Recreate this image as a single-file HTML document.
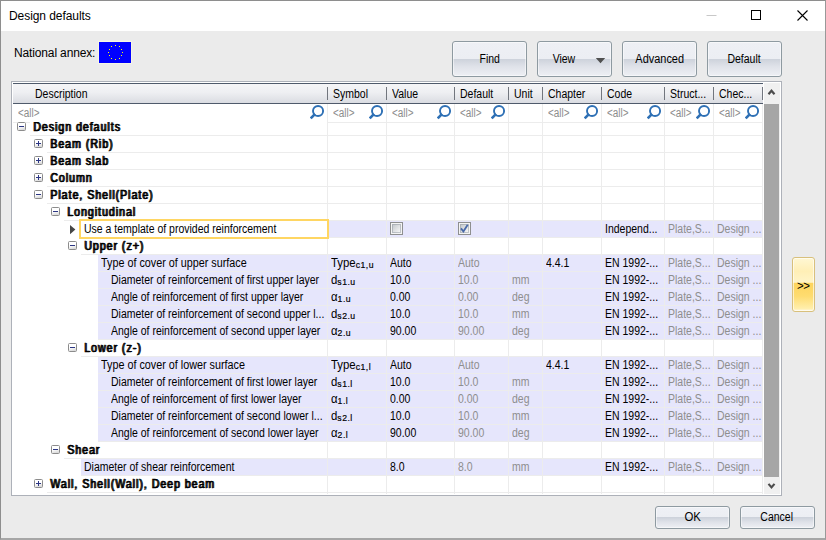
<!DOCTYPE html><html><head><meta charset="utf-8"><title>Design defaults</title><style>
*{box-sizing:border-box;margin:0;padding:0}
html,body{width:826px;height:540px;overflow:hidden;background:#ebebeb}
body{position:relative;font-family:"Liberation Sans","DejaVu Sans",sans-serif;font-size:11px;color:#000}
.abs{position:absolute}
#win{position:absolute;left:0;top:0;width:826px;height:540px;border:1px solid #8e8e8e;border-right-color:#999;border-bottom:2px solid #a6a6a6;background:#ebebeb}
#title{position:absolute;left:1px;top:1px;width:824px;height:30px;background:#fff}
#title .t{position:absolute;left:8px;top:7px;font-size:12px;line-height:16px;letter-spacing:-0.07px}
.btn{position:absolute;height:36px;width:75px;border:1px solid #8e9aa1;border-radius:3px;text-align:center;line-height:34px;font-size:12px;
 background:linear-gradient(#eef0f5 0,#eceef3 50%,#cdd2db 50%,#dfe2e9 72%,#eef0f4 100%);box-shadow:inset 0 0 0 1px rgba(255,255,255,.5)}
.sbtn{position:absolute;height:23px;width:75px;border:1px solid #8e9aa1;border-radius:3px;text-align:center;line-height:21px;font-size:12px;
 background:linear-gradient(#eef0f5 0,#eceef3 50%,#cdd2db 50%,#dfe2e9 72%,#eef0f4 100%);box-shadow:inset 0 0 0 1px rgba(255,255,255,.5)}
.btn span,.sbtn span{display:inline-block;transform:scaleX(.874);transform-origin:50% 50%}
#grid{position:absolute;left:11px;top:81px;width:771px;height:415px;border:1px solid #adb1b9;background:#fff;overflow:hidden}
#g{position:absolute;left:-12px;top:-82px;width:826px;height:540px}
.hdr{position:absolute;left:13px;top:83px;width:750px;height:21px;background:linear-gradient(#f5f5f7 0,#eeeff2 45%,#dadce2 100%);border-top:1px solid #4f5a6b;border-bottom:1px solid #4f5a6b}
.hsep{position:absolute;top:87px;width:1px;height:13px;background:#72767e}
.ht{position:absolute;top:86px;line-height:16px;font-size:12.5px;white-space:nowrap;transform:scaleX(.839);transform-origin:0 0}
.vl{position:absolute;top:104px;width:1px;height:390px;background:#ececec}
.hl{position:absolute;height:1px;background:#ececec}
.row{position:absolute;height:16px}
.lav{position:absolute;height:16px;background:#e6e6fc}
.tx{position:absolute;line-height:16px;white-space:nowrap;font-size:12.5px;transform:scaleX(.839);transform-origin:0 0}
.b{letter-spacing:1.22px;text-shadow:1.19px 0 0 #000;-webkit-text-stroke:0.45px #000}
.gr{color:#8e8e8e}
.all{position:absolute;top:105px;line-height:16px;color:#8c8c8c;font-size:12px;transform:scaleX(.83);transform-origin:0 0}
.exp{position:absolute;width:9px;height:9px;border:1px solid #8c8c8c;border-radius:1.5px;background:linear-gradient(165deg,#fff 0,#fff 45%,#d2d2d2 100%)}
.exp i{position:absolute;left:1px;top:3px;width:5px;height:1px;background:#2c3684}
.exp b{position:absolute;left:3px;top:1px;width:1px;height:5px;background:#2c3684}
sub{font-size:9.5px;vertical-align:baseline;position:relative;top:1px;letter-spacing:0.55px;line-height:0;-webkit-text-stroke:0.2px #000}
</style></head><body>
<div id="win">
</div>
<div id="title"><div class="t">Design defaults</div>
<svg class="abs" style="left:699px;top:0" width="125" height="30" viewBox="0 0 125 30"><path d="M6.5 14.5h10" stroke="#c8c8c8" stroke-width="1" fill="none"/><rect x="51.5" y="9.5" width="9" height="9" stroke="#000" stroke-width="1" fill="none"/><path d="M97.5 9.5l10 10M107.5 9.5l-10 10" stroke="#000" stroke-width="1.1" fill="none"/></svg>
</div>
<div class="abs" style="left:14px;top:45px;font-size:12px;line-height:16px;letter-spacing:-0.14px">National annex:</div>
<svg class="abs" style="left:98px;top:41px" width="34" height="23" viewBox="0 0 34 23" shape-rendering="crispEdges"><rect width="34" height="23" fill="#f6f6e4"/><rect x="1" y="1" width="32" height="21" fill="#0000ff"/><rect x="17" y="4" width="1" height="1" fill="#ffff00"/><rect x="21" y="5" width="1" height="1" fill="#ffff00"/><rect x="23" y="8" width="1" height="1" fill="#ffff00"/><rect x="24" y="11" width="1" height="1" fill="#ffff00"/><rect x="23" y="14" width="1" height="1" fill="#ffff00"/><rect x="21" y="17" width="1" height="1" fill="#ffff00"/><rect x="17" y="18" width="1" height="1" fill="#ffff00"/><rect x="13" y="17" width="1" height="1" fill="#ffff00"/><rect x="11" y="14" width="1" height="1" fill="#ffff00"/><rect x="10" y="11" width="1" height="1" fill="#ffff00"/><rect x="11" y="8" width="1" height="1" fill="#ffff00"/><rect x="13" y="5" width="1" height="1" fill="#ffff00"/></svg>
<div class="btn" style="left:452px;top:41px"><span>Find</span></div>
<div class="btn" style="left:537px;top:41px"><span style="position:absolute;left:13px;top:0">View</span><svg class="abs" style="left:57px;top:16px" width="11" height="6"><path d="M0.8 0h9.4l-4.7 5.2z" fill="#505050"/></svg></div>
<div class="btn" style="left:622px;top:41px"><span style="transform:scaleX(.913)">Advanced</span></div>
<div class="btn" style="left:707px;top:41px"><span>Default</span></div>
<div id="grid"><div id="g">
<div class="hdr"></div>
<div class="ht" style="left:35px">Description</div>
<div class="hsep" style="left:327px"></div>
<div class="ht" style="left:333px">Symbol</div>
<div class="hsep" style="left:386px"></div>
<div class="ht" style="left:392px">Value</div>
<div class="hsep" style="left:454px"></div>
<div class="ht" style="left:460px">Default</div>
<div class="hsep" style="left:508px"></div>
<div class="ht" style="left:514px">Unit</div>
<div class="hsep" style="left:542px"></div>
<div class="ht" style="left:548px">Chapter</div>
<div class="hsep" style="left:601px"></div>
<div class="ht" style="left:607px">Code</div>
<div class="hsep" style="left:664px"></div>
<div class="ht" style="left:670px">Struct...</div>
<div class="hsep" style="left:713px"></div>
<div class="ht" style="left:719px">Chec...</div>
<div class="hsep" style="left:762px"></div>
<div class="vl" style="left:327px"></div>
<div class="vl" style="left:386px"></div>
<div class="vl" style="left:454px"></div>
<div class="vl" style="left:508px"></div>
<div class="vl" style="left:542px"></div>
<div class="vl" style="left:601px"></div>
<div class="vl" style="left:664px"></div>
<div class="vl" style="left:713px"></div>
<div class="vl" style="left:762px"></div>
<div class="hl" style="left:30px;top:135px;width:733px"></div>
<div class="exp" style="left:17px;top:122px"><i></i></div>
<div class="tx b" style="left:33px;top:119px">Design defaults</div>
<div class="hl" style="left:47px;top:152px;width:716px"></div>
<div class="exp" style="left:34px;top:139px"><i></i><b></b></div>
<div class="tx b" style="left:50px;top:136px">Beam (Rib)</div>
<div class="hl" style="left:47px;top:169px;width:716px"></div>
<div class="exp" style="left:34px;top:156px"><i></i><b></b></div>
<div class="tx b" style="left:50px;top:153px">Beam slab</div>
<div class="hl" style="left:47px;top:186px;width:716px"></div>
<div class="exp" style="left:34px;top:173px"><i></i><b></b></div>
<div class="tx b" style="left:50px;top:170px">Column</div>
<div class="hl" style="left:47px;top:203px;width:716px"></div>
<div class="exp" style="left:34px;top:190px"><i></i></div>
<div class="tx b" style="left:50px;top:187px">Plate, Shell(Plate)</div>
<div class="hl" style="left:64px;top:220px;width:699px"></div>
<div class="exp" style="left:51px;top:207px"><i></i></div>
<div class="tx b" style="left:67px;top:204px">Longitudinal</div>
<div class="lav" style="left:329px;top:221px;width:433px"></div>
<div class="hl" style="left:81px;top:237px;width:682px"></div>
<div class="abs" style="left:327px;top:221px;width:1px;height:16px;background:#ececec"></div>
<div class="abs" style="left:386px;top:221px;width:1px;height:16px;background:#ececec"></div>
<div class="abs" style="left:454px;top:221px;width:1px;height:16px;background:#ececec"></div>
<div class="abs" style="left:508px;top:221px;width:1px;height:16px;background:#ececec"></div>
<div class="abs" style="left:542px;top:221px;width:1px;height:16px;background:#ececec"></div>
<div class="abs" style="left:601px;top:221px;width:1px;height:16px;background:#ececec"></div>
<div class="abs" style="left:664px;top:221px;width:1px;height:16px;background:#ececec"></div>
<div class="abs" style="left:713px;top:221px;width:1px;height:16px;background:#ececec"></div>
<div class="abs" style="left:79px;top:219px;width:250px;height:20px;border:2px solid #ffd662;background:#fff"></div>
<svg class="abs" style="left:70px;top:225px" width="6" height="11"><path d="M0 0L5.4 4.6L0 9.2z" fill="#464646"/></svg>
<div class="tx" style="left:84px;top:221px">Use a template of provided reinforcement</div>
<div class="abs" style="left:390px;top:222px;width:13px;height:13px;border:1px solid #8e8f8f;background:linear-gradient(135deg,#c4c8cc 15%,#f8f8f8 85%);box-shadow:inset 0 0 0 1px #f4f4f4, inset 0 0 0 2px rgba(150,156,164,.55)"></div>
<div class="abs" style="left:458px;top:222px;width:13px;height:13px;border:1px solid #8e8f8f;background:linear-gradient(135deg,#c4c8cc 15%,#f8f8f8 85%);box-shadow:inset 0 0 0 1px #f4f4f4, inset 0 0 0 2px rgba(150,156,164,.55)"></div>
<svg class="abs" style="left:458px;top:222px" width="13" height="13"><path d="M3.0 6.4L5.4 9.5L9.7 2.7" stroke="#4868a8" stroke-width="1.8" fill="none"/></svg>
<div class="tx" style="left:605px;top:221px">Independ...</div>
<div class="tx gr" style="left:668px;top:221px">Plate,S...</div>
<div class="tx gr" style="left:717px;top:221px">Design ...</div>
<div class="hl" style="left:81px;top:254px;width:682px"></div>
<div class="exp" style="left:68px;top:241px"><i></i></div>
<div class="tx b" style="left:84px;top:238px">Upper (z+)</div>
<div class="lav" style="left:98px;top:255px;width:664px"></div>
<div class="hl" style="left:98px;top:271px;width:665px"></div>
<div class="abs" style="left:327px;top:255px;width:1px;height:16px;background:#ececec"></div>
<div class="abs" style="left:386px;top:255px;width:1px;height:16px;background:#ececec"></div>
<div class="abs" style="left:454px;top:255px;width:1px;height:16px;background:#ececec"></div>
<div class="abs" style="left:508px;top:255px;width:1px;height:16px;background:#ececec"></div>
<div class="abs" style="left:542px;top:255px;width:1px;height:16px;background:#ececec"></div>
<div class="abs" style="left:601px;top:255px;width:1px;height:16px;background:#ececec"></div>
<div class="abs" style="left:664px;top:255px;width:1px;height:16px;background:#ececec"></div>
<div class="abs" style="left:713px;top:255px;width:1px;height:16px;background:#ececec"></div>
<div class="tx" style="left:101px;top:255px;transform:scaleX(.863)">Type of cover of upper surface</div>
<div class="tx" style="left:331px;top:255px;transform:scaleX(.91)">Type<sub>c1,u</sub></div>
<div class="tx" style="left:390px;top:255px">Auto</div>
<div class="tx gr" style="left:458px;top:255px">Auto</div>
<div class="tx" style="left:546px;top:255px">4.4.1</div>
<div class="tx" style="left:605px;top:255px">EN 1992-...</div>
<div class="tx gr" style="left:668px;top:255px">Plate,S...</div>
<div class="tx gr" style="left:717px;top:255px">Design ...</div>
<div class="lav" style="left:98px;top:272px;width:664px"></div>
<div class="hl" style="left:98px;top:288px;width:665px"></div>
<div class="abs" style="left:327px;top:272px;width:1px;height:16px;background:#ececec"></div>
<div class="abs" style="left:386px;top:272px;width:1px;height:16px;background:#ececec"></div>
<div class="abs" style="left:454px;top:272px;width:1px;height:16px;background:#ececec"></div>
<div class="abs" style="left:508px;top:272px;width:1px;height:16px;background:#ececec"></div>
<div class="abs" style="left:542px;top:272px;width:1px;height:16px;background:#ececec"></div>
<div class="abs" style="left:601px;top:272px;width:1px;height:16px;background:#ececec"></div>
<div class="abs" style="left:664px;top:272px;width:1px;height:16px;background:#ececec"></div>
<div class="abs" style="left:713px;top:272px;width:1px;height:16px;background:#ececec"></div>
<div class="tx" style="left:111px;top:272px">Diameter of reinforcement of first upper layer</div>
<div class="tx" style="left:331px;top:272px;transform:scaleX(.91)">d<sub>s1.u</sub></div>
<div class="tx" style="left:390px;top:272px">10.0</div>
<div class="tx gr" style="left:458px;top:272px">10.0</div>
<div class="tx gr" style="left:512px;top:272px">mm</div>
<div class="tx" style="left:605px;top:272px">EN 1992-...</div>
<div class="tx gr" style="left:668px;top:272px">Plate,S...</div>
<div class="tx gr" style="left:717px;top:272px">Design ...</div>
<div class="lav" style="left:98px;top:289px;width:664px"></div>
<div class="hl" style="left:98px;top:305px;width:665px"></div>
<div class="abs" style="left:327px;top:289px;width:1px;height:16px;background:#ececec"></div>
<div class="abs" style="left:386px;top:289px;width:1px;height:16px;background:#ececec"></div>
<div class="abs" style="left:454px;top:289px;width:1px;height:16px;background:#ececec"></div>
<div class="abs" style="left:508px;top:289px;width:1px;height:16px;background:#ececec"></div>
<div class="abs" style="left:542px;top:289px;width:1px;height:16px;background:#ececec"></div>
<div class="abs" style="left:601px;top:289px;width:1px;height:16px;background:#ececec"></div>
<div class="abs" style="left:664px;top:289px;width:1px;height:16px;background:#ececec"></div>
<div class="abs" style="left:713px;top:289px;width:1px;height:16px;background:#ececec"></div>
<div class="tx" style="left:111px;top:289px">Angle of reinforcement of first upper layer</div>
<div class="tx" style="left:331px;top:289px;transform:scaleX(.91)">α<sub>1.u</sub></div>
<div class="tx" style="left:390px;top:289px">0.00</div>
<div class="tx gr" style="left:458px;top:289px">0.00</div>
<div class="tx gr" style="left:512px;top:289px">deg</div>
<div class="tx" style="left:605px;top:289px">EN 1992-...</div>
<div class="tx gr" style="left:668px;top:289px">Plate,S...</div>
<div class="tx gr" style="left:717px;top:289px">Design ...</div>
<div class="lav" style="left:98px;top:306px;width:664px"></div>
<div class="hl" style="left:98px;top:322px;width:665px"></div>
<div class="abs" style="left:327px;top:306px;width:1px;height:16px;background:#ececec"></div>
<div class="abs" style="left:386px;top:306px;width:1px;height:16px;background:#ececec"></div>
<div class="abs" style="left:454px;top:306px;width:1px;height:16px;background:#ececec"></div>
<div class="abs" style="left:508px;top:306px;width:1px;height:16px;background:#ececec"></div>
<div class="abs" style="left:542px;top:306px;width:1px;height:16px;background:#ececec"></div>
<div class="abs" style="left:601px;top:306px;width:1px;height:16px;background:#ececec"></div>
<div class="abs" style="left:664px;top:306px;width:1px;height:16px;background:#ececec"></div>
<div class="abs" style="left:713px;top:306px;width:1px;height:16px;background:#ececec"></div>
<div class="tx" style="left:111px;top:306px">Diameter of reinforcement of second upper l...</div>
<div class="tx" style="left:331px;top:306px;transform:scaleX(.91)">d<sub>s2.u</sub></div>
<div class="tx" style="left:390px;top:306px">10.0</div>
<div class="tx gr" style="left:458px;top:306px">10.0</div>
<div class="tx gr" style="left:512px;top:306px">mm</div>
<div class="tx" style="left:605px;top:306px">EN 1992-...</div>
<div class="tx gr" style="left:668px;top:306px">Plate,S...</div>
<div class="tx gr" style="left:717px;top:306px">Design ...</div>
<div class="lav" style="left:98px;top:323px;width:664px"></div>
<div class="hl" style="left:98px;top:339px;width:665px"></div>
<div class="abs" style="left:327px;top:323px;width:1px;height:16px;background:#ececec"></div>
<div class="abs" style="left:386px;top:323px;width:1px;height:16px;background:#ececec"></div>
<div class="abs" style="left:454px;top:323px;width:1px;height:16px;background:#ececec"></div>
<div class="abs" style="left:508px;top:323px;width:1px;height:16px;background:#ececec"></div>
<div class="abs" style="left:542px;top:323px;width:1px;height:16px;background:#ececec"></div>
<div class="abs" style="left:601px;top:323px;width:1px;height:16px;background:#ececec"></div>
<div class="abs" style="left:664px;top:323px;width:1px;height:16px;background:#ececec"></div>
<div class="abs" style="left:713px;top:323px;width:1px;height:16px;background:#ececec"></div>
<div class="tx" style="left:111px;top:323px">Angle of reinforcement of second upper layer</div>
<div class="tx" style="left:331px;top:323px;transform:scaleX(.91)">α<sub>2.u</sub></div>
<div class="tx" style="left:390px;top:323px">90.00</div>
<div class="tx gr" style="left:458px;top:323px">90.00</div>
<div class="tx gr" style="left:512px;top:323px">deg</div>
<div class="tx" style="left:605px;top:323px">EN 1992-...</div>
<div class="tx gr" style="left:668px;top:323px">Plate,S...</div>
<div class="tx gr" style="left:717px;top:323px">Design ...</div>
<div class="hl" style="left:81px;top:356px;width:682px"></div>
<div class="exp" style="left:68px;top:343px"><i></i></div>
<div class="tx b" style="left:84px;top:340px">Lower (z-)</div>
<div class="lav" style="left:98px;top:357px;width:664px"></div>
<div class="hl" style="left:98px;top:373px;width:665px"></div>
<div class="abs" style="left:327px;top:357px;width:1px;height:16px;background:#ececec"></div>
<div class="abs" style="left:386px;top:357px;width:1px;height:16px;background:#ececec"></div>
<div class="abs" style="left:454px;top:357px;width:1px;height:16px;background:#ececec"></div>
<div class="abs" style="left:508px;top:357px;width:1px;height:16px;background:#ececec"></div>
<div class="abs" style="left:542px;top:357px;width:1px;height:16px;background:#ececec"></div>
<div class="abs" style="left:601px;top:357px;width:1px;height:16px;background:#ececec"></div>
<div class="abs" style="left:664px;top:357px;width:1px;height:16px;background:#ececec"></div>
<div class="abs" style="left:713px;top:357px;width:1px;height:16px;background:#ececec"></div>
<div class="tx" style="left:101px;top:357px;transform:scaleX(.863)">Type of cover of lower surface</div>
<div class="tx" style="left:331px;top:357px;transform:scaleX(.91)">Type<sub>c1,l</sub></div>
<div class="tx" style="left:390px;top:357px">Auto</div>
<div class="tx gr" style="left:458px;top:357px">Auto</div>
<div class="tx" style="left:546px;top:357px">4.4.1</div>
<div class="tx" style="left:605px;top:357px">EN 1992-...</div>
<div class="tx gr" style="left:668px;top:357px">Plate,S...</div>
<div class="tx gr" style="left:717px;top:357px">Design ...</div>
<div class="lav" style="left:98px;top:374px;width:664px"></div>
<div class="hl" style="left:98px;top:390px;width:665px"></div>
<div class="abs" style="left:327px;top:374px;width:1px;height:16px;background:#ececec"></div>
<div class="abs" style="left:386px;top:374px;width:1px;height:16px;background:#ececec"></div>
<div class="abs" style="left:454px;top:374px;width:1px;height:16px;background:#ececec"></div>
<div class="abs" style="left:508px;top:374px;width:1px;height:16px;background:#ececec"></div>
<div class="abs" style="left:542px;top:374px;width:1px;height:16px;background:#ececec"></div>
<div class="abs" style="left:601px;top:374px;width:1px;height:16px;background:#ececec"></div>
<div class="abs" style="left:664px;top:374px;width:1px;height:16px;background:#ececec"></div>
<div class="abs" style="left:713px;top:374px;width:1px;height:16px;background:#ececec"></div>
<div class="tx" style="left:111px;top:374px">Diameter of reinforcement of first lower layer</div>
<div class="tx" style="left:331px;top:374px;transform:scaleX(.91)">d<sub>s1.l</sub></div>
<div class="tx" style="left:390px;top:374px">10.0</div>
<div class="tx gr" style="left:458px;top:374px">10.0</div>
<div class="tx gr" style="left:512px;top:374px">mm</div>
<div class="tx" style="left:605px;top:374px">EN 1992-...</div>
<div class="tx gr" style="left:668px;top:374px">Plate,S...</div>
<div class="tx gr" style="left:717px;top:374px">Design ...</div>
<div class="lav" style="left:98px;top:391px;width:664px"></div>
<div class="hl" style="left:98px;top:407px;width:665px"></div>
<div class="abs" style="left:327px;top:391px;width:1px;height:16px;background:#ececec"></div>
<div class="abs" style="left:386px;top:391px;width:1px;height:16px;background:#ececec"></div>
<div class="abs" style="left:454px;top:391px;width:1px;height:16px;background:#ececec"></div>
<div class="abs" style="left:508px;top:391px;width:1px;height:16px;background:#ececec"></div>
<div class="abs" style="left:542px;top:391px;width:1px;height:16px;background:#ececec"></div>
<div class="abs" style="left:601px;top:391px;width:1px;height:16px;background:#ececec"></div>
<div class="abs" style="left:664px;top:391px;width:1px;height:16px;background:#ececec"></div>
<div class="abs" style="left:713px;top:391px;width:1px;height:16px;background:#ececec"></div>
<div class="tx" style="left:111px;top:391px">Angle of reinforcement of first lower layer</div>
<div class="tx" style="left:331px;top:391px;transform:scaleX(.91)">α<sub>1.l</sub></div>
<div class="tx" style="left:390px;top:391px">0.00</div>
<div class="tx gr" style="left:458px;top:391px">0.00</div>
<div class="tx gr" style="left:512px;top:391px">deg</div>
<div class="tx" style="left:605px;top:391px">EN 1992-...</div>
<div class="tx gr" style="left:668px;top:391px">Plate,S...</div>
<div class="tx gr" style="left:717px;top:391px">Design ...</div>
<div class="lav" style="left:98px;top:408px;width:664px"></div>
<div class="hl" style="left:98px;top:424px;width:665px"></div>
<div class="abs" style="left:327px;top:408px;width:1px;height:16px;background:#ececec"></div>
<div class="abs" style="left:386px;top:408px;width:1px;height:16px;background:#ececec"></div>
<div class="abs" style="left:454px;top:408px;width:1px;height:16px;background:#ececec"></div>
<div class="abs" style="left:508px;top:408px;width:1px;height:16px;background:#ececec"></div>
<div class="abs" style="left:542px;top:408px;width:1px;height:16px;background:#ececec"></div>
<div class="abs" style="left:601px;top:408px;width:1px;height:16px;background:#ececec"></div>
<div class="abs" style="left:664px;top:408px;width:1px;height:16px;background:#ececec"></div>
<div class="abs" style="left:713px;top:408px;width:1px;height:16px;background:#ececec"></div>
<div class="tx" style="left:111px;top:408px">Diameter of reinforcement of second lower l...</div>
<div class="tx" style="left:331px;top:408px;transform:scaleX(.91)">d<sub>s2.l</sub></div>
<div class="tx" style="left:390px;top:408px">10.0</div>
<div class="tx gr" style="left:458px;top:408px">10.0</div>
<div class="tx gr" style="left:512px;top:408px">mm</div>
<div class="tx" style="left:605px;top:408px">EN 1992-...</div>
<div class="tx gr" style="left:668px;top:408px">Plate,S...</div>
<div class="tx gr" style="left:717px;top:408px">Design ...</div>
<div class="lav" style="left:98px;top:425px;width:664px"></div>
<div class="hl" style="left:98px;top:441px;width:665px"></div>
<div class="abs" style="left:327px;top:425px;width:1px;height:16px;background:#ececec"></div>
<div class="abs" style="left:386px;top:425px;width:1px;height:16px;background:#ececec"></div>
<div class="abs" style="left:454px;top:425px;width:1px;height:16px;background:#ececec"></div>
<div class="abs" style="left:508px;top:425px;width:1px;height:16px;background:#ececec"></div>
<div class="abs" style="left:542px;top:425px;width:1px;height:16px;background:#ececec"></div>
<div class="abs" style="left:601px;top:425px;width:1px;height:16px;background:#ececec"></div>
<div class="abs" style="left:664px;top:425px;width:1px;height:16px;background:#ececec"></div>
<div class="abs" style="left:713px;top:425px;width:1px;height:16px;background:#ececec"></div>
<div class="tx" style="left:111px;top:425px">Angle of reinforcement of second lower layer</div>
<div class="tx" style="left:331px;top:425px;transform:scaleX(.91)">α<sub>2.l</sub></div>
<div class="tx" style="left:390px;top:425px">90.00</div>
<div class="tx gr" style="left:458px;top:425px">90.00</div>
<div class="tx gr" style="left:512px;top:425px">deg</div>
<div class="tx" style="left:605px;top:425px">EN 1992-...</div>
<div class="tx gr" style="left:668px;top:425px">Plate,S...</div>
<div class="tx gr" style="left:717px;top:425px">Design ...</div>
<div class="hl" style="left:64px;top:458px;width:699px"></div>
<div class="exp" style="left:51px;top:445px"><i></i></div>
<div class="tx b" style="left:67px;top:442px">Shear</div>
<div class="lav" style="left:81px;top:459px;width:681px"></div>
<div class="hl" style="left:81px;top:475px;width:682px"></div>
<div class="abs" style="left:327px;top:459px;width:1px;height:16px;background:#ececec"></div>
<div class="abs" style="left:386px;top:459px;width:1px;height:16px;background:#ececec"></div>
<div class="abs" style="left:454px;top:459px;width:1px;height:16px;background:#ececec"></div>
<div class="abs" style="left:508px;top:459px;width:1px;height:16px;background:#ececec"></div>
<div class="abs" style="left:542px;top:459px;width:1px;height:16px;background:#ececec"></div>
<div class="abs" style="left:601px;top:459px;width:1px;height:16px;background:#ececec"></div>
<div class="abs" style="left:664px;top:459px;width:1px;height:16px;background:#ececec"></div>
<div class="abs" style="left:713px;top:459px;width:1px;height:16px;background:#ececec"></div>
<div class="tx" style="left:84px;top:459px">Diameter of shear reinforcement</div>
<div class="tx" style="left:390px;top:459px">8.0</div>
<div class="tx gr" style="left:458px;top:459px">8.0</div>
<div class="tx gr" style="left:512px;top:459px">mm</div>
<div class="tx" style="left:605px;top:459px">EN 1992-...</div>
<div class="tx gr" style="left:668px;top:459px">Plate,S...</div>
<div class="tx gr" style="left:717px;top:459px">Design ...</div>
<div class="hl" style="left:47px;top:492px;width:716px"></div>
<div class="exp" style="left:34px;top:479px"><i></i><b></b></div>
<div class="tx b" style="left:50px;top:476px">Wall, Shell(Wall), Deep beam</div>
<div class="abs" style="left:13px;top:104px;width:750px;height:18px;background:#fff"></div>
<div class="hl" style="left:13px;top:122px;width:4px"></div>
<div class="hl" style="left:26px;top:122px;width:4px"></div>
<div class="hl" style="left:328px;top:122px;width:435px"></div>
<div class="abs" style="left:327px;top:104px;width:1px;height:18px;background:#ececec"></div>
<div class="abs" style="left:386px;top:104px;width:1px;height:18px;background:#ececec"></div>
<div class="abs" style="left:454px;top:104px;width:1px;height:18px;background:#ececec"></div>
<div class="abs" style="left:508px;top:104px;width:1px;height:18px;background:#ececec"></div>
<div class="abs" style="left:542px;top:104px;width:1px;height:18px;background:#ececec"></div>
<div class="abs" style="left:601px;top:104px;width:1px;height:18px;background:#ececec"></div>
<div class="abs" style="left:664px;top:104px;width:1px;height:18px;background:#ececec"></div>
<div class="abs" style="left:713px;top:104px;width:1px;height:18px;background:#ececec"></div>
<div class="abs" style="left:762px;top:104px;width:1px;height:18px;background:#ececec"></div>
<div class="all" style="left:18px">&lt;all&gt;</div>
<svg class="abs" style="left:310px;top:104px" width="16" height="16" viewBox="0 0 16 16"><circle cx="8.05" cy="7" r="5.05" stroke="#2e70b5" stroke-width="1.9" fill="none"/><path d="M4.9 10.15L0.7 14.35" stroke="#2e70b5" stroke-width="2.7"/></svg>
<div class="all" style="left:333px">&lt;all&gt;</div>
<svg class="abs" style="left:369px;top:104px" width="16" height="16" viewBox="0 0 16 16"><circle cx="8.05" cy="7" r="5.05" stroke="#2e70b5" stroke-width="1.9" fill="none"/><path d="M4.9 10.15L0.7 14.35" stroke="#2e70b5" stroke-width="2.7"/></svg>
<div class="all" style="left:392px">&lt;all&gt;</div>
<svg class="abs" style="left:437px;top:104px" width="16" height="16" viewBox="0 0 16 16"><circle cx="8.05" cy="7" r="5.05" stroke="#2e70b5" stroke-width="1.9" fill="none"/><path d="M4.9 10.15L0.7 14.35" stroke="#2e70b5" stroke-width="2.7"/></svg>
<div class="all" style="left:460px">&lt;all&gt;</div>
<svg class="abs" style="left:491px;top:104px" width="16" height="16" viewBox="0 0 16 16"><circle cx="8.05" cy="7" r="5.05" stroke="#2e70b5" stroke-width="1.9" fill="none"/><path d="M4.9 10.15L0.7 14.35" stroke="#2e70b5" stroke-width="2.7"/></svg>
<div class="all" style="left:548px">&lt;all&gt;</div>
<svg class="abs" style="left:584px;top:104px" width="16" height="16" viewBox="0 0 16 16"><circle cx="8.05" cy="7" r="5.05" stroke="#2e70b5" stroke-width="1.9" fill="none"/><path d="M4.9 10.15L0.7 14.35" stroke="#2e70b5" stroke-width="2.7"/></svg>
<div class="all" style="left:607px">&lt;all&gt;</div>
<svg class="abs" style="left:647px;top:104px" width="16" height="16" viewBox="0 0 16 16"><circle cx="8.05" cy="7" r="5.05" stroke="#2e70b5" stroke-width="1.9" fill="none"/><path d="M4.9 10.15L0.7 14.35" stroke="#2e70b5" stroke-width="2.7"/></svg>
<div class="all" style="left:670px">&lt;all&gt;</div>
<svg class="abs" style="left:696px;top:104px" width="16" height="16" viewBox="0 0 16 16"><circle cx="8.05" cy="7" r="5.05" stroke="#2e70b5" stroke-width="1.9" fill="none"/><path d="M4.9 10.15L0.7 14.35" stroke="#2e70b5" stroke-width="2.7"/></svg>
<div class="all" style="left:719px">&lt;all&gt;</div>
<svg class="abs" style="left:745px;top:104px" width="16" height="16" viewBox="0 0 16 16"><circle cx="8.05" cy="7" r="5.05" stroke="#2e70b5" stroke-width="1.9" fill="none"/><path d="M4.9 10.15L0.7 14.35" stroke="#2e70b5" stroke-width="2.7"/></svg>
<div class="abs" style="left:764px;top:83px;width:16px;height:411px;background:#f0f0f0"></div>
<div class="abs" style="left:764px;top:104px;width:15px;height:373px;background:#a6a6a6"></div>
<svg class="abs" style="left:764px;top:83px" width="16" height="21"><path d="M4.5 11.2L7.5 7.7L10.5 11.2" stroke="#4d4d4d" stroke-width="2.2" fill="none"/></svg>
<svg class="abs" style="left:764px;top:477px" width="16" height="17"><path d="M4.5 6.9L7.5 10.4L10.5 6.9" stroke="#4d4d4d" stroke-width="2.2" fill="none"/></svg>
</div></div>
<div class="abs" style="left:792px;top:257px;width:23px;height:55px;border:1px solid #d8c07c;border-radius:3px;background:linear-gradient(#fff7d4 0,#ffefb6 25%,#fff4c8 46%,#fdd45c 47%,#fedc70 72%,#ffeeaa 95%,#fff8de 100%);box-shadow:inset 0 0 0 1px rgba(255,255,255,.6)"><div class="abs" style="left:4px;top:20px;font-size:12.5px;line-height:16px;letter-spacing:-0.6px;transform:scaleX(.92);transform-origin:0 0">&gt;&gt;</div></div>
<div class="sbtn" style="left:655px;top:506px"><span style="transform:scaleX(.95)">OK</span></div>
<div class="sbtn" style="left:740px;top:506px"><span style="position:relative;left:-1px">Cancel</span></div>
</body></html>
